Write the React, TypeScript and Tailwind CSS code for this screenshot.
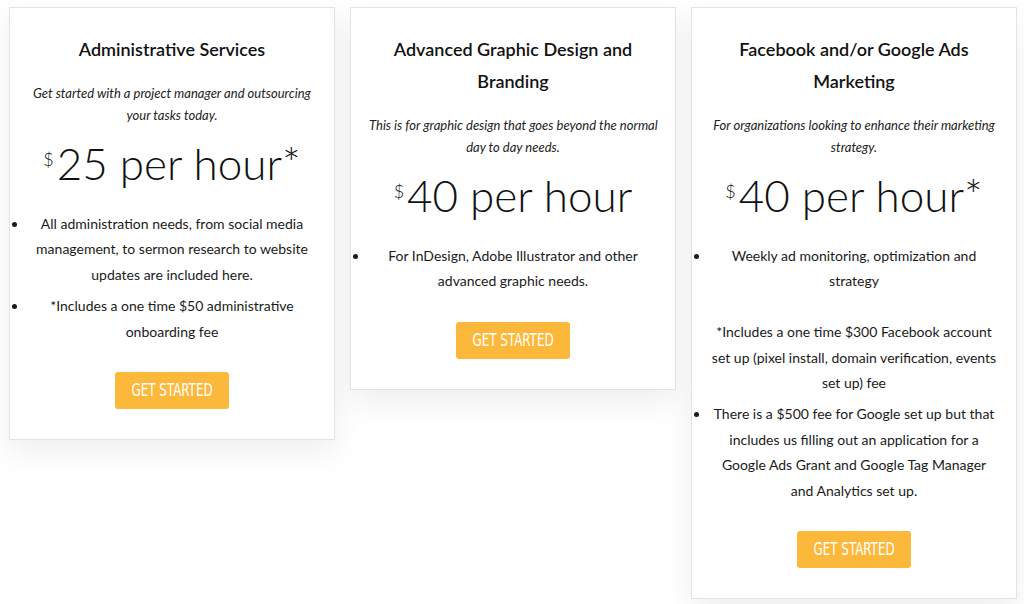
import React from "react";

type Plan = {
  title: string[];
  blurb: string[];
  price: string;
  items: React.ReactNode[];
};

const plans: Plan[] = [
  {
    title: ["Administrative Services"],
    blurb: ["Get started with a project manager and outsourcing", "your tasks today."],
    price: "25 per hour*",
    items: [
      "All administration needs, from social media management, to sermon research to website updates are included here.",
      "*Includes a one time $50 administrative onboarding fee",
    ],
  },
  {
    title: ["Advanced Graphic Design and", "Branding"],
    blurb: ["This is for graphic design that goes beyond the normal", "day to day needs."],
    price: "40 per hour",
    items: ["For InDesign, Adobe Illustrator and other advanced graphic needs."],
  },
  {
    title: ["Facebook and/or Google Ads", "Marketing"],
    blurb: ["For organizations looking to enhance their marketing", "strategy."],
    price: "40 per hour*",
    items: [
      <>
        Weekly ad monitoring, optimization and strategy
        <br />
        <br />
        *Includes a one time $300 Facebook account set up (pixel install, domain verification, events set up) fee
      </>,
      "There is a $500 fee for Google set up but that includes us filling out an application for a Google Ads Grant and Google Tag Manager and Analytics set up.",
    ],
  },
];

function PlanCard({ plan }: { plan: Plan }) {
  return (
    <div className="w-[326px] shrink-0 border border-[#e3e3e3] bg-white px-[18px] pt-[25px] pb-[30px] text-center shadow-[0_12px_30px_rgba(0,0,0,0.07)]">
      <h2 className="text-[18px] font-semibold leading-[32px] text-[#111]">
        {plan.title.map((t) => (
          <div key={t}>{t}</div>
        ))}
      </h2>
      <p className="mt-[17px] text-[13px] italic leading-[22px] text-[#222]">
        {plan.blurb.map((t) => (
          <span key={t} className="block whitespace-nowrap">
            {t}
          </span>
        ))}
      </p>
      <div className="mt-[9px] flex items-start justify-center leading-[56px] text-[#111]">
        <span className="mr-[3px] mt-[-4px] text-[18px] font-light">$</span>
        <span className="text-[44px] font-light">{plan.price}</span>
      </div>
      <ul className="mt-[20px] list-outside list-disc pl-0 text-[14px] leading-[25.4px] text-[#1a1a1a]">
        {plan.items.map((it, i) => (
          <li key={i} className="mb-[6px]">
            {it}
          </li>
        ))}
      </ul>
      <div className="mt-[28px] flex justify-center">
        <button className="h-[37px] w-[114px] rounded-[3px] bg-[#fcb83a] text-[17px] font-light uppercase text-white [font-family:'DejaVu_Sans_Condensed','Liberation_Sans',sans-serif]">
          <span className="inline-block scale-x-[0.78]">Get Started</span>
        </button>
      </div>
    </div>
  );
}

export default function App() {
  return (
    <div className="flex min-h-[604px] items-start gap-[15px] bg-white pl-[9px] pt-[7px] [font-family:Lato,'Noto_Sans',sans-serif]">
      {plans.map((p) => (
        <PlanCard key={p.price + p.title[0]} plan={p} />
      ))}
    </div>
  );
}
